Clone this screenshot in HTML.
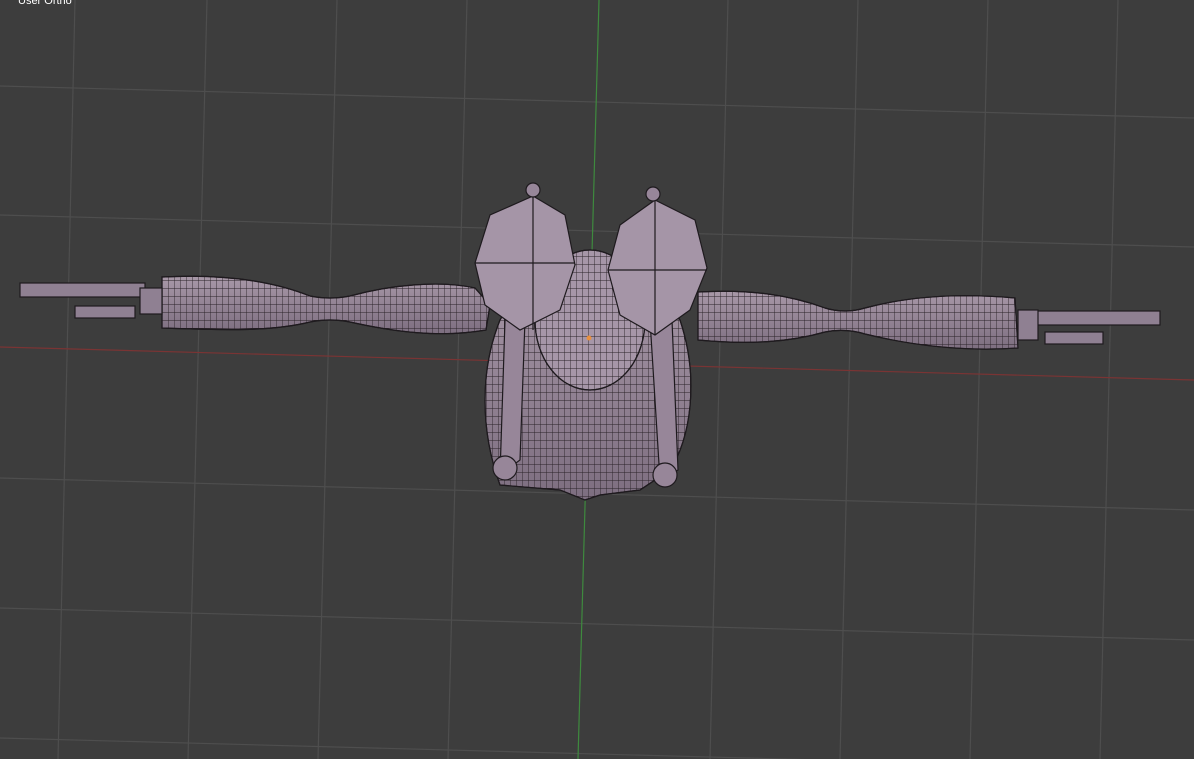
<!DOCTYPE html>
<html><head><style>html,body{margin:0;padding:0;background:#3d3d3d;overflow:hidden}svg{display:block}
.t{position:absolute;left:18px;top:-5px;font:11px "Liberation Sans",sans-serif;color:#fff}</style></head>
<body>
<div class="t">User Ortho</div>
<svg width="1194" height="759" viewBox="0 0 1194 759">
<rect width="1194" height="759" fill="#3d3d3d"/>
<defs>
<pattern id="m" width="6" height="8" patternUnits="userSpaceOnUse"><path d="M0 0V8M0 0H6" stroke="#2a2228" stroke-width="0.9" fill="none"/></pattern>
<linearGradient id="g" x1="0" y1="0" x2="0" y2="1"><stop offset="0" stop-color="#a898a8"/><stop offset="1" stop-color="#7d6e80"/></linearGradient>
</defs>
<g stroke="#4e4e4e" stroke-width="1.2">
<line x1="0" y1="86" x2="1194" y2="118"/>
<line x1="0" y1="215" x2="1194" y2="247"/>
<line x1="0" y1="478" x2="1194" y2="510"/>
<line x1="0" y1="608" x2="1194" y2="640"/>
<line x1="0" y1="738" x2="1194" y2="770"/>
<line x1="75" y1="0" x2="58" y2="759"/>
<line x1="207" y1="0" x2="188" y2="759"/>
<line x1="337" y1="0" x2="318" y2="759"/>
<line x1="467" y1="0" x2="448" y2="759"/>
<line x1="728" y1="0" x2="710" y2="759"/>
<line x1="858" y1="0" x2="840" y2="759"/>
<line x1="988" y1="0" x2="970" y2="759"/>
<line x1="1118" y1="0" x2="1100" y2="759"/>
</g>
<line x1="0" y1="347" x2="1194" y2="380" stroke="#7a3434" stroke-width="1.2"/>
<line x1="599" y1="0" x2="578" y2="759" stroke="#3e8a3e" stroke-width="1.2"/>
<g stroke="#1e1a1e" stroke-width="1.2">
<path id="la" d="M162 277 C220 274 270 280 310 296 Q330 300 350 296 C390 285 440 280 475 288 L490 305 L486 330 C440 338 395 332 350 322 Q330 318 310 322 C270 332 220 330 162 328 Z" fill="url(#g)"/>
<path d="M162 277 C220 274 270 280 310 296 Q330 300 350 296 C390 285 440 280 475 288 L490 305 L486 330 C440 338 395 332 350 322 Q330 318 310 322 C270 332 220 330 162 328 Z" fill="url(#m)"/>
<rect x="20" y="283" width="125" height="14" fill="#8f8092"/>
<rect x="75" y="306" width="60" height="12" fill="#8f8092"/>
<rect x="140" y="288" width="22" height="26" fill="#8f8092"/>
<path d="M698 292 C750 289 790 295 825 308 Q845 314 865 308 C910 296 960 293 1015 298 L1018 348 C960 352 910 345 865 334 Q845 328 825 332 C790 342 750 345 698 340 Z" fill="url(#g)"/>
<path d="M698 292 C750 289 790 295 825 308 Q845 314 865 308 C910 296 960 293 1015 298 L1018 348 C960 352 910 345 865 334 Q845 328 825 332 C790 342 750 345 698 340 Z" fill="url(#m)"/>
<rect x="1035" y="311" width="125" height="14" fill="#8f8092"/>
<rect x="1045" y="332" width="58" height="12" fill="#8f8092"/>
<rect x="1018" y="310" width="20" height="30" fill="#8f8092"/>
<path d="M500 320 C540 250 640 250 680 320 C700 380 690 440 670 470 L640 490 L600 495 L585 500 L560 490 L500 485 C480 430 480 370 500 320 Z" fill="url(#g)"/>
<path d="M500 320 C540 250 640 250 680 320 C700 380 690 440 670 470 L640 490 L600 495 L585 500 L560 490 L500 485 C480 430 480 370 500 320 Z" fill="url(#m)"/>
<ellipse cx="590" cy="320" rx="55" ry="70" fill="#a696a8"/>
<ellipse cx="590" cy="320" rx="55" ry="70" fill="url(#m)"/>
<path d="M505 320 L525 320 L520 460 L500 475 Z" fill="#978699"/>
<path d="M650 320 L672 320 L678 470 L660 480 Z" fill="#978699"/>
<circle cx="505" cy="468" r="12" fill="#978699"/>
<circle cx="665" cy="475" r="12" fill="#978699"/>
<path d="M533 196 L565 215 L575 265 L560 310 L520 330 L485 305 L475 263 L490 215 Z" fill="#a595a7"/>
<path d="M533 196 V330 M475 263 H575" fill="none"/>
<path d="M655 200 L695 220 L707 268 L690 310 L655 335 L620 315 L608 270 L620 225 Z" fill="#a595a7"/>
<path d="M655 200 V335 M608 270 H707" fill="none"/>
<circle cx="533" cy="190" r="7" fill="#978699"/>
<circle cx="653" cy="194" r="7" fill="#978699"/>
</g>
<circle cx="589" cy="338" r="2.5" fill="#e89040"/>
</svg>
</body></html>
